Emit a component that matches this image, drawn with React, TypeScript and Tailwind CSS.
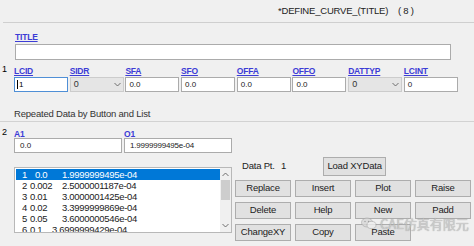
import React from 'react'

const Lbl = ({ t }: { t: string }) => (
  <span className="text-[8.5px] font-bold text-[#3c3cd6] underline leading-[10px] tracking-[-0.2px]">{t}</span>
)

const Chevron = () => (
  <svg width="7" height="5" viewBox="0 0 7 5" className="text-[#606060]">
    <path d="M0.5 1 L3.5 4 L6.5 1" fill="none" stroke="currentColor" strokeWidth="0.9" />
  </svg>
)

const TextBox = ({ v, focus }: { v: string; focus?: boolean }) => (
  <div
    className={
      focus
        ? 'h-[15px] bg-white border border-[#4f8fd6] flex items-center pl-[2px] text-[8px]'
        : 'h-[15px] bg-white border border-[#ababab] flex items-center pl-[3px] text-[8px] text-[#222]'
    }
  >
    {focus && <span className="w-px h-[9px] bg-black mr-[1px]" />}
    {v}
  </div>
)

const SelectBox = ({ v }: { v: string }) => (
  <div className="h-[15px] bg-[#e5e5e5] border border-[#cccccc] flex items-center justify-between pl-[3px] pr-[2px] text-[9px] text-[#333]">
    <span>{v}</span>
    <Chevron />
  </div>
)

const rows = [
  { i: '1', v: '0.0', y: '1.9999999495e-04', vc: 'ml-[8px] w-[27px]', sel: true },
  { i: '2', v: '0.002', y: '2.5000001187e-04', vc: 'ml-[3px] w-[32px]' },
  { i: '3', v: '0.01', y: '3.0000001425e-04', vc: 'ml-[3px] w-[32px]' },
  { i: '4', v: '0.02', y: '3.3999999869e-04', vc: 'ml-[3px] w-[32px]' },
  { i: '5', v: '0.05', y: '3.6000000546e-04', vc: 'ml-[3px] w-[32px]' },
  { i: '6', v: '0.1', y: '3.6999999429e-04', vc: 'ml-[3px] w-[22px]' },
]

const buttons = ['Replace', 'Insert', 'Plot', 'Raise', 'Delete', 'Help', 'New', 'Padd', 'ChangeXY', 'Copy', 'Paste']

export default function App() {
  return (
    <div className="w-[474px] h-[246px] bg-[#f0f0f0] overflow-hidden relative font-['Liberation_Sans',Arial,sans-serif] text-black">
      {/* header */}
      <div className="ml-[3px] h-[23px] border-b border-[#cfcfcf] flex items-center pl-[275px] text-[9.5px] text-[#222] whitespace-pre tracking-[-0.2px]">
        *DEFINE_CURVE_(TITLE)    ( 8 )
      </div>

      {/* title */}
      <div className="pl-[15px] pt-[7px] h-[17px] leading-[10px]">
        <Lbl t="TITLE" />
      </div>
      <div className="ml-[15px] mt-[4px] w-[436px] h-[16px] bg-white border border-[#ababab]" />

      {/* card 1 */}
      <div className="flex mt-[4px] h-[10px] leading-[10px]">
        <span className="w-[14px] pl-[2px] text-[9px]">1</span>
        <div className="grid grid-cols-[repeat(8,54px)] gap-x-[1.7px]">
          {['LCID', 'SIDR', 'SFA', 'SFO', 'OFFA', 'OFFO', 'DATTYP', 'LCINT'].map((l) => (
            <div key={l}><Lbl t={l} /></div>
          ))}
        </div>
      </div>
      <div className="mt-[3px] ml-[14px] grid grid-cols-[repeat(8,54px)] gap-x-[1.7px]">
        <TextBox v="1" focus />
        <SelectBox v="0" />
        <TextBox v="0.0" />
        <TextBox v="0.0" />
        <TextBox v="0.0" />
        <TextBox v="0.0" />
        <SelectBox v="0" />
        <TextBox v="0" />
      </div>

      <div className="mt-[16px] pl-[14px] leading-[11px] text-[9.5px] text-[#333] tracking-[-0.2px]">
        Repeated Data by Button and List
      </div>
      <div className="mt-[2px] border-t border-[#d2d2d2]" />

      {/* card 2 */}
      <div className="flex mt-[5px] h-[10px] leading-[10px]">
        <span className="w-[14px] pl-[2px] text-[9px]">2</span>
        <div className="grid grid-cols-[108px_108px] gap-x-[2px]">
          <div><Lbl t="A1" /></div>
          <div><Lbl t="O1" /></div>
        </div>
      </div>
      <div className="mt-[1px] ml-[14px] grid grid-cols-[108px_108px] gap-x-[2px]">
        <div className="h-[15px] bg-white border border-[#ababab] flex items-center pl-[5px] text-[8px] text-[#222]">0.0</div>
        <div className="h-[15px] bg-white border border-[#ababab] flex items-center pl-[5px] text-[8px] text-[#222] tracking-[-0.2px]">1.9999999495e-04</div>
      </div>

      {/* list + buttons */}
      <div className="flex items-start mt-[4px]">
        <div className="ml-[14px] mt-[10px] w-[218px] h-[66px] bg-white border border-[#b8b8b8] flex overflow-hidden">
          <div className="flex-1 pt-px pl-px">
            {rows.map((r) => (
              <div
                key={r.i}
                className={
                  r.sel
                    ? 'flex h-[11px] leading-[11px] text-[9.5px] whitespace-pre bg-[#0078d7] text-white tracking-[-0.3px]'
                    : 'flex h-[11px] leading-[11px] text-[9.5px] whitespace-pre text-[#222] tracking-[-0.3px]'
                }
              >
                <span className="w-[11px] text-right">{r.i}</span>
                <span className={r.vc}>{r.v}</span>
                <span>{r.y}</span>
              </div>
            ))}
          </div>
          <div className="w-[11px] flex flex-col items-center bg-[#f0f0f0]">
            <svg width="7" height="5" viewBox="0 0 7 5" className="mt-[4px] text-[#606060]">
              <path d="M0.5 4 L3.5 1 L6.5 4" fill="none" stroke="currentColor" strokeWidth="0.9" />
            </svg>
            <div className="mt-[3px] w-[9px] h-[20px] bg-[#cdcdcd]" />
            <div className="flex-1" />
            <div className="mb-[4px]"><Chevron /></div>
          </div>
        </div>

        <div className="ml-[3px] w-[238px]">
          <div className="flex items-center h-[19px] text-[9.5px] text-[#222] tracking-[-0.2px]">
            <span className="ml-[7px] w-[39px]">Data Pt.</span>
            <span>1</span>
            <div className="ml-[37px] w-[63px] h-[19px] bg-[#e1e1e1] border border-[#adadad] flex items-center justify-center">
              Load XYData
            </div>
          </div>
          <div className="mt-[4px] grid grid-cols-[repeat(4,56px)] gap-x-[4px] gap-y-[5px]">
            {buttons.map((b) => (
              <div
                key={b}
                className="h-[17px] bg-[#e1e1e1] border border-[#adadad] flex items-center justify-center text-[9.5px] text-[#222] tracking-[-0.2px]"
              >
                {b}
              </div>
            ))}
          </div>
        </div>
      </div>

      {/* watermark */}
      <div className="absolute left-[361px] top-[216px] flex items-center gap-[3px] opacity-80">
        <svg width="16" height="13" viewBox="0 0 16 13">
          <ellipse cx="6" cy="5.5" rx="5.5" ry="4.5" fill="#d8d8d8" stroke="#9a9a9a" strokeWidth="0.6" />
          <ellipse cx="10.5" cy="8" rx="4.5" ry="3.6" fill="#eeeeee" stroke="#9a9a9a" strokeWidth="0.6" />
          <circle cx="4" cy="4.5" r="0.7" fill="#8a8a8a" />
          <circle cx="7.6" cy="4.5" r="0.7" fill="#8a8a8a" />
        </svg>
        <span className="text-[13px] text-[#c4c4c4] font-['Noto_Sans_CJK_SC',sans-serif] leading-[15px] [text-shadow:0_0_1px_#888]">
          CAE仿真有限元
        </span>
      </div>
    </div>
  )
}
